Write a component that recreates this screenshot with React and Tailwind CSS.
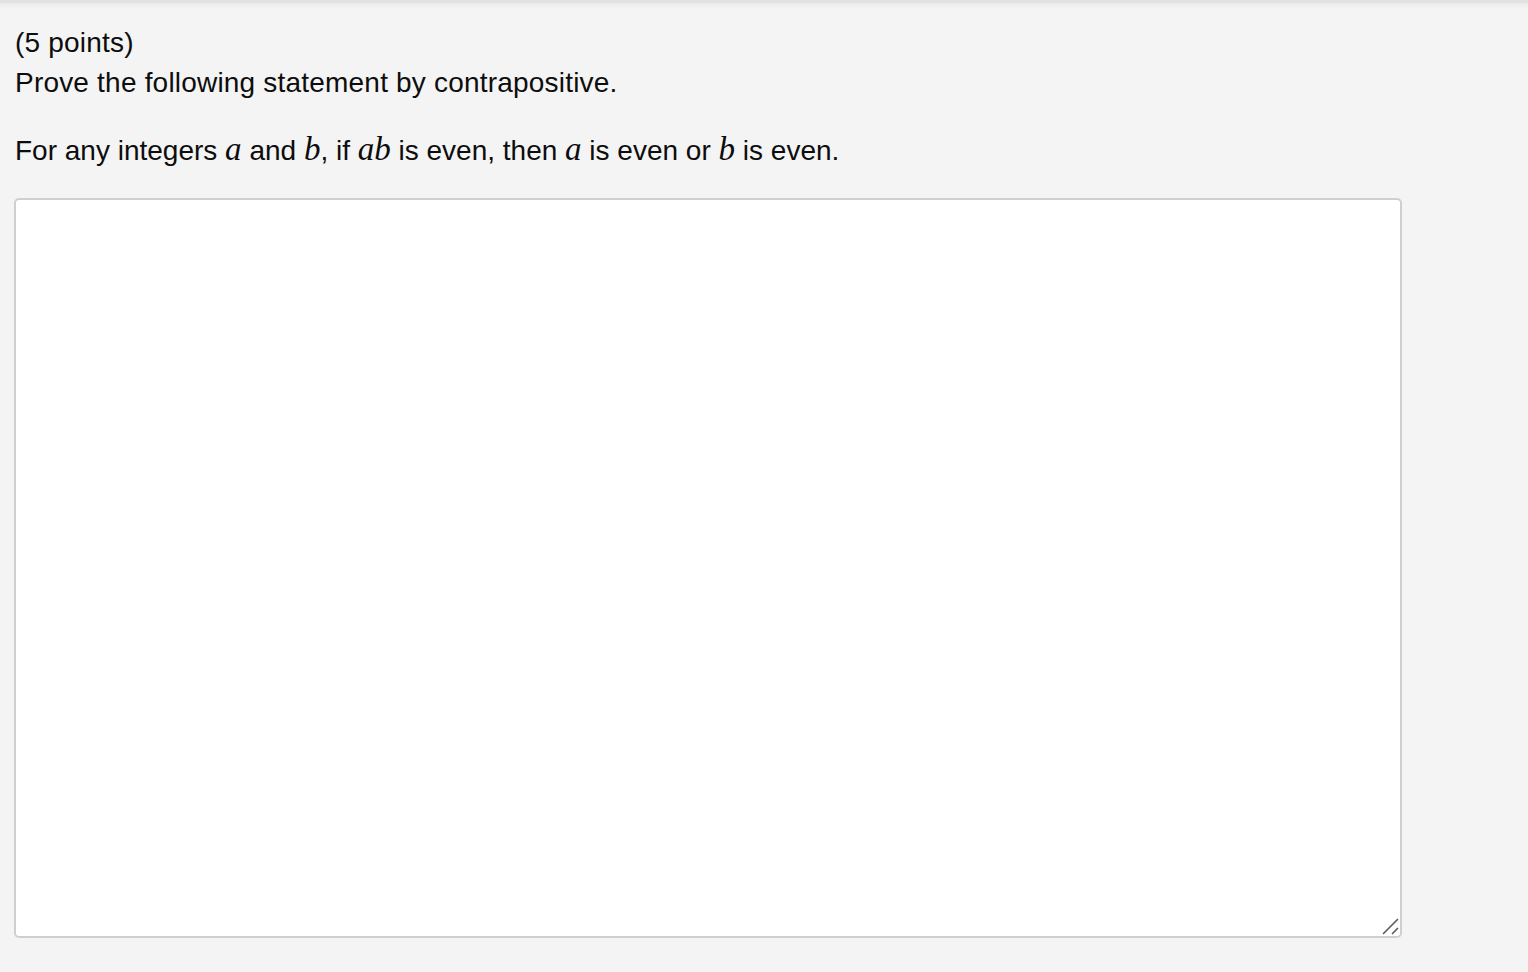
import React from "react";

// Math variable in italic serif, like MathJax output
const M = ({ children }) => (
  <span className="font-['Liberation_Serif',serif] italic text-[33px] leading-none">{children}</span>
);

const App = () => {
  return (
    <div className="min-h-screen bg-[#f4f4f4] font-['Liberation_Sans',Arial,sans-serif] text-[#0d0d0d] border-t-[3px] border-[#e2e2e2]">
      <div className="h-[6px] bg-gradient-to-b from-[#ebebeb] to-[#f4f4f4]" />
      <div className="px-[15px] pt-[14px]">
        <p className="text-[28px] leading-[40px] tracking-[0.2px]">(5 points)</p>
        <p className="text-[28px] leading-[40px] tracking-[0.2px]">Prove the following statement by contrapositive.</p>
        <p className="text-[28px] leading-[40px] mt-[28px]">
          For any integers <M>a</M> and <M>b</M>, if <M>ab</M> is even, then <M>a</M> is even or{" "}
          <M>b</M> is even.
        </p>
        <div className="relative mt-[27px] w-[1388px] -ml-[1px]">
          <textarea className="block w-full h-[740px] bg-white border-2 border-[#cfcfcf] rounded-[5px] outline-none resize-none" />
          <svg className="absolute right-[3px] bottom-[3px]" width="17" height="17" viewBox="0 0 17 17">
            <path d="M1.5 15.5 L15.5 1.5 M10.5 15.5 L15.5 10.5" stroke="#5f5f5f" strokeWidth="1.7" strokeLinecap="round" />
          </svg>
        </div>
      </div>
    </div>
  );
};

export default App;
